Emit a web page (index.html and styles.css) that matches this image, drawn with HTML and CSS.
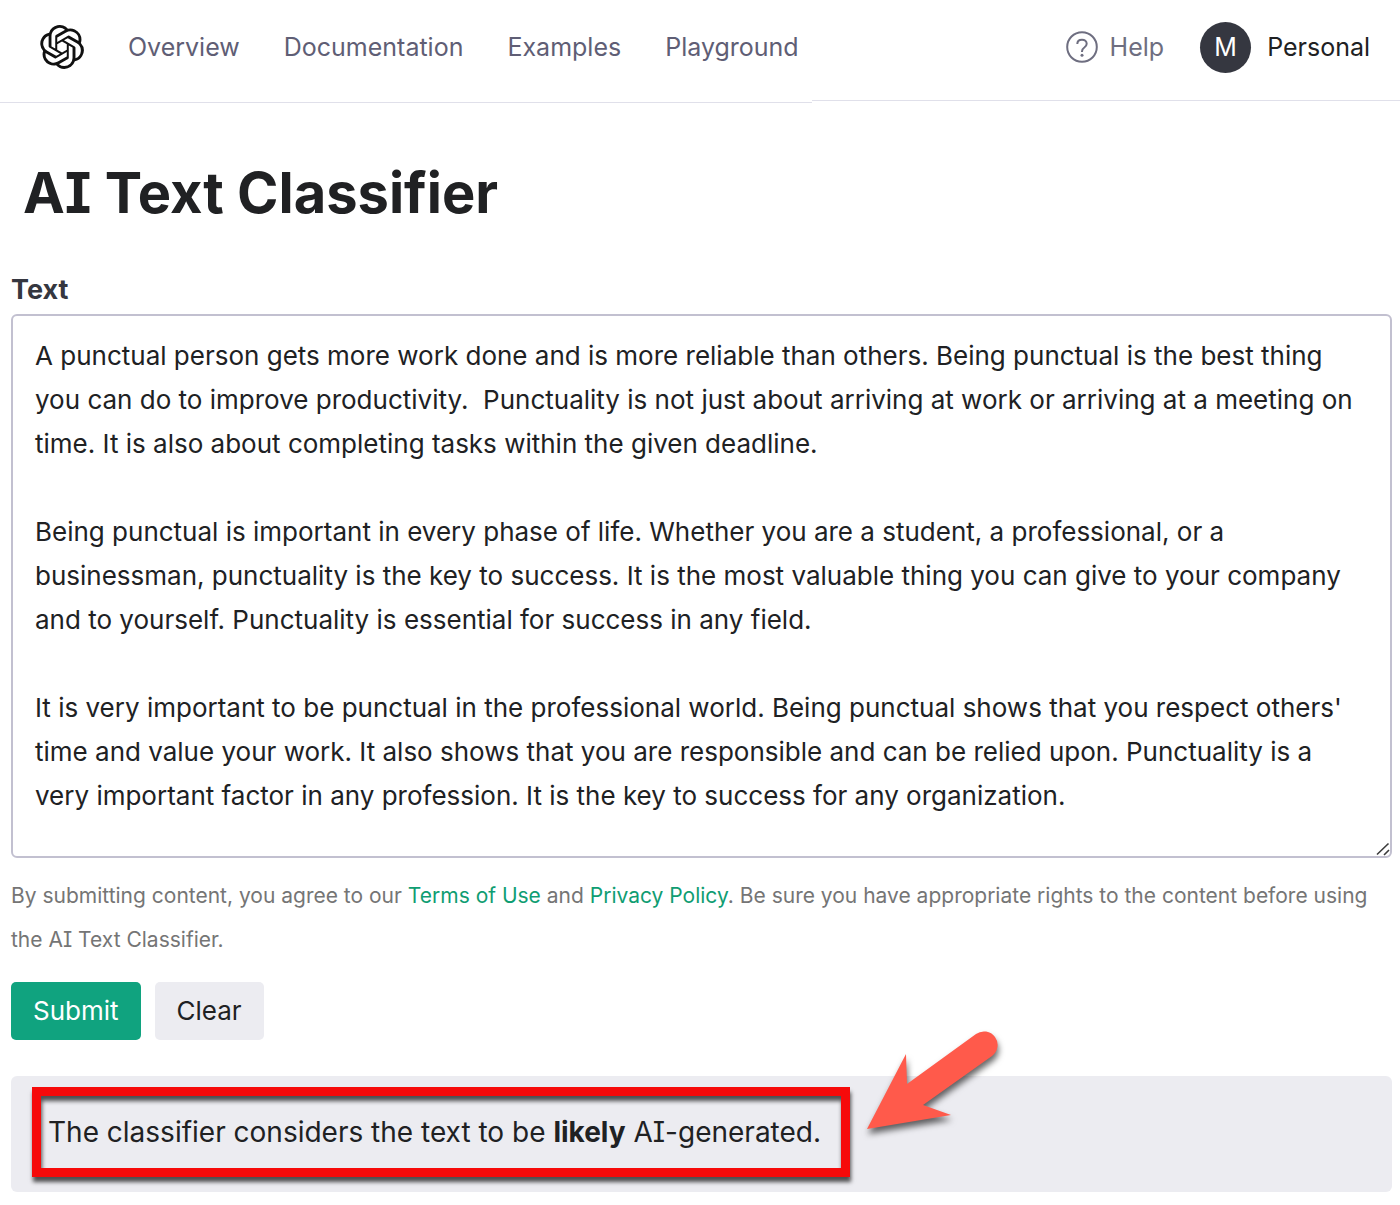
FILE: index.html
```html
<!DOCTYPE html>
<html lang="en">
<head>
<meta charset="utf-8">
<meta name="viewport" content="width=device-width, initial-scale=1">
<title>AI Text Classifier</title>
<link rel="stylesheet" href="styles.css">
</head>
<body>
<header class="header">
  <nav class="nav" aria-label="Main">
    <a class="logo" href="#" aria-label="Home">
      <svg viewBox="0 0 24 24" width="44" height="44" fill="currentColor" aria-hidden="true"><path d="M22.2819 9.8211a5.9847 5.9847 0 0 0-.5157-4.9108 6.0462 6.0462 0 0 0-6.5098-2.9A6.0651 6.0651 0 0 0 4.9807 4.1818a5.9847 5.9847 0 0 0-3.9977 2.9 6.0462 6.0462 0 0 0 .7427 7.0966 5.98 5.98 0 0 0 .511 4.9107 6.051 6.051 0 0 0 6.5146 2.9001A5.9847 5.9847 0 0 0 13.2599 24a6.0557 6.0557 0 0 0 5.7718-4.2058 5.9894 5.9894 0 0 0 3.9977-2.9001 6.0557 6.0557 0 0 0-.7475-7.0729zm-9.022 12.6081a4.4755 4.4755 0 0 1-2.8764-1.0408l.1419-.0804 4.7783-2.7582a.7948.7948 0 0 0 .3927-.6813v-6.7369l2.02 1.1686a.071.071 0 0 1 .038.052v5.5826a4.504 4.504 0 0 1-4.4945 4.4944zm-9.6607-4.1254a4.4708 4.4708 0 0 1-.5346-3.0137l.142.0852 4.783 2.7582a.7712.7712 0 0 0 .7806 0l5.8428-3.3685v2.3324a.0804.0804 0 0 1-.0332.0615L9.74 19.9502a4.4992 4.4992 0 0 1-6.1408-1.6464zM2.3408 7.8956a4.485 4.485 0 0 1 2.3655-1.9728V11.6a.7664.7664 0 0 0 .3879.6765l5.8144 3.3543-2.0201 1.1685a.0757.0757 0 0 1-.071 0l-4.8303-2.7865A4.504 4.504 0 0 1 2.3408 7.872zm16.5963 3.8558L13.1038 8.364 15.1192 7.2a.0757.0757 0 0 1 .071 0l4.8303 2.7913a4.4944 4.4944 0 0 1-.6765 8.1042v-5.6772a.79.79 0 0 0-.407-.667zm2.0107-3.0231l-.142-.0852-4.7735-2.7818a.7759.7759 0 0 0-.7854 0L9.409 9.2297V6.8974a.0662.0662 0 0 1 .0284-.0615l4.8303-2.7866a4.4992 4.4992 0 0 1 6.6802 4.66zM8.3065 12.863l-2.02-1.1638a.0804.0804 0 0 1-.038-.0567V6.0742a4.4992 4.4992 0 0 1 7.3757-3.4537l-.142.0805L8.704 5.459a.7948.7948 0 0 0-.3927.6813zm1.0976-2.3654l2.602-1.4998 2.6069 1.4998v2.9994l-2.5974 1.4997-2.6067-1.4997Z"/></svg>
    </a>
    <a class="nav-link" href="#">Overview</a>
    <a class="nav-link" href="#">Documentation</a>
    <a class="nav-link" href="#">Examples</a>
    <a class="nav-link" href="#">Playground</a>
  </nav>
  <div class="account">
    <a class="help" href="#">
      <svg class="help-icon" viewBox="0 0 32 32" width="32" height="32" fill="none" stroke="currentColor" stroke-width="2" aria-hidden="true"><circle cx="16" cy="16" r="14.8"/><path d="M11.3 13.1c0-2.8 2-4.4 4.7-4.4s4.7 1.7 4.7 4.1c0 1.8-1 2.7-2.4 3.7-1.5 1-2.3 1.8-2.3 4v.5"/><circle cx="16" cy="24.2" r="1.5" fill="currentColor" stroke="none"/></svg>
      Help
    </a>
    <button class="profile" type="button"><span class="avatar">M</span>Personal</button>
  </div>
</header>

<main class="main">
  <h1 class="title">AI Text Classifier</h1>
  <form class="form">
    <label class="label" for="text">Text</label>
    <div class="field">
      <textarea class="textarea" id="text" rows="11" spellcheck="false">A punctual person gets more work done and is more reliable than others. Being punctual is the best thing you can do to improve productivity.  Punctuality is not just about arriving at work or arriving at a meeting on time. It is also about completing tasks within the given deadline.

Being punctual is important in every phase of life. Whether you are a student, a professional, or a businessman, punctuality is the key to success. It is the most valuable thing you can give to your company and to yourself. Punctuality is essential for success in any field.

It is very important to be punctual in the professional world. Being punctual shows that you respect others' time and value your work. It also shows that you are responsible and can be relied upon. Punctuality is a very important factor in any profession. It is the key to success for any organization.</textarea>
      <svg class="grip" viewBox="0 0 14 14" width="14" height="14" stroke="#3c3c3c" stroke-width="1.6" aria-hidden="true"><path d="M1 12.5 12.5 1.5M8 13 13 8"/></svg>
    </div>
    <p class="terms">By submitting content, you agree to our <a href="#">Terms of Use</a> and <a href="#">Privacy Policy</a>. Be sure you have appropriate rights to the content before using the AI Text Classifier.</p>
    <div class="actions">
      <button class="button primary" type="submit">Submit</button>
      <button class="button" type="reset">Clear</button>
    </div>
  </form>
  <section class="result">
    <p class="verdict">The classifier considers the text to be <strong>likely</strong> AI-generated.
      <svg class="arrow" viewBox="0 0 160 130" width="160" height="130" aria-hidden="true"><path d="M8 110 47 35 48 65 117 15A13 13 0 0 1 133 37L64 86 92 96Z" fill="#ff5a4b"/></svg>
    </p>
  </section>
</main>
</body>
</html>
```
FILE: styles.css
```css
* {
  box-sizing: border-box;
}

body {
  margin: 0;
  background: #fff;
  color: #202123;
  font-family: Inter, "Liberation Sans", sans-serif;
  font-size: 25px;
}

a {
  color: inherit;
  text-decoration: none;
}

button {
  border: 0;
  font: inherit;
  color: inherit;
  cursor: pointer;
}

.header {
  display: flex;
  align-items: flex-start;
}

.nav,
.account {
  display: flex;
  align-items: center;
  height: 101px;
  padding-bottom: 6px;
  border-bottom: 1px solid #e0e0ea;
}

.nav {
  flex: 0 0 58%;
  height: 103px;
  padding-bottom: 8px;
  gap: 44px;
  padding-left: 40px;
  color: #5f5e75;
}

.logo {
  display: flex;
  color: #111;
}

.account {
  flex: 1;
  justify-content: flex-end;
  gap: 36px;
  padding-right: 30px;
}

.help {
  display: flex;
  align-items: center;
  gap: 12px;
  color: #6e6e80;
}

.profile {
  display: flex;
  align-items: center;
  gap: 16px;
  padding: 0;
  background: none;
}

.avatar {
  width: 51px;
  border-radius: 50%;
  background: #353740;
  color: #fff;
  line-height: 51px;
}

.main {
  padding: 56px 8px 12px 11px;
}

/* Capital I with serifs, to tell it from a lower-case l in "AI" */
.title,
.terms,
.verdict {
  font-feature-settings: "cv08";
}

.title {
  margin: 0 12px;
  font-size: 56px;
  line-height: 68px;
}

.label {
  display: block;
  margin: 46px 0 7px;
  color: #353740;
  font-size: 27px;
  font-weight: 700;
  line-height: 34px;
}

.field {
  position: relative;
}

.textarea {
  display: block;
  width: 100%;
  padding: 18px 22px 38px;
  border: 2px solid #c2c0d0;
  border-radius: 6px;
  background: #fff;
  color: #202123;
  font: inherit;
  font-size: 26px;
  line-height: 44px;
  resize: none;
  outline: 0;
  overflow: hidden;
}

.grip {
  position: absolute;
  right: 2px;
  bottom: 2px;
  pointer-events: none;
}

.terms {
  margin: 16px 0 20px;
  color: #757575;
  font-size: 21px;
  line-height: 44px;
}

.terms a {
  color: #0f9d72;
}

.actions {
  display: flex;
  gap: 14px;
}

.button {
  padding: 0 22px;
  border-radius: 5px;
  background: #ececf1;
  font-size: 26px;
  line-height: 58px;
}

.primary {
  background: #10a37f;
  color: #fff;
}

.result {
  display: flex;
  margin-top: 36px;
  padding: 11px 21px 15px;
  border-radius: 6px;
  background: #ececf1;
}

.verdict {
  position: relative;
  margin: 0;
  padding: 0 20px 0 7px;
  border: 9px solid #f60a0a;
  box-shadow: 1px 5px 4px #000a, inset 1px 5px 4px #000a;
  font-size: 28px;
  line-height: 72px;
}

.arrow {
  position: absolute;
  left: 100%;
  bottom: 19px;
  margin-left: 18px;
  filter: drop-shadow(1px 5px 3px #0009);
}
```
